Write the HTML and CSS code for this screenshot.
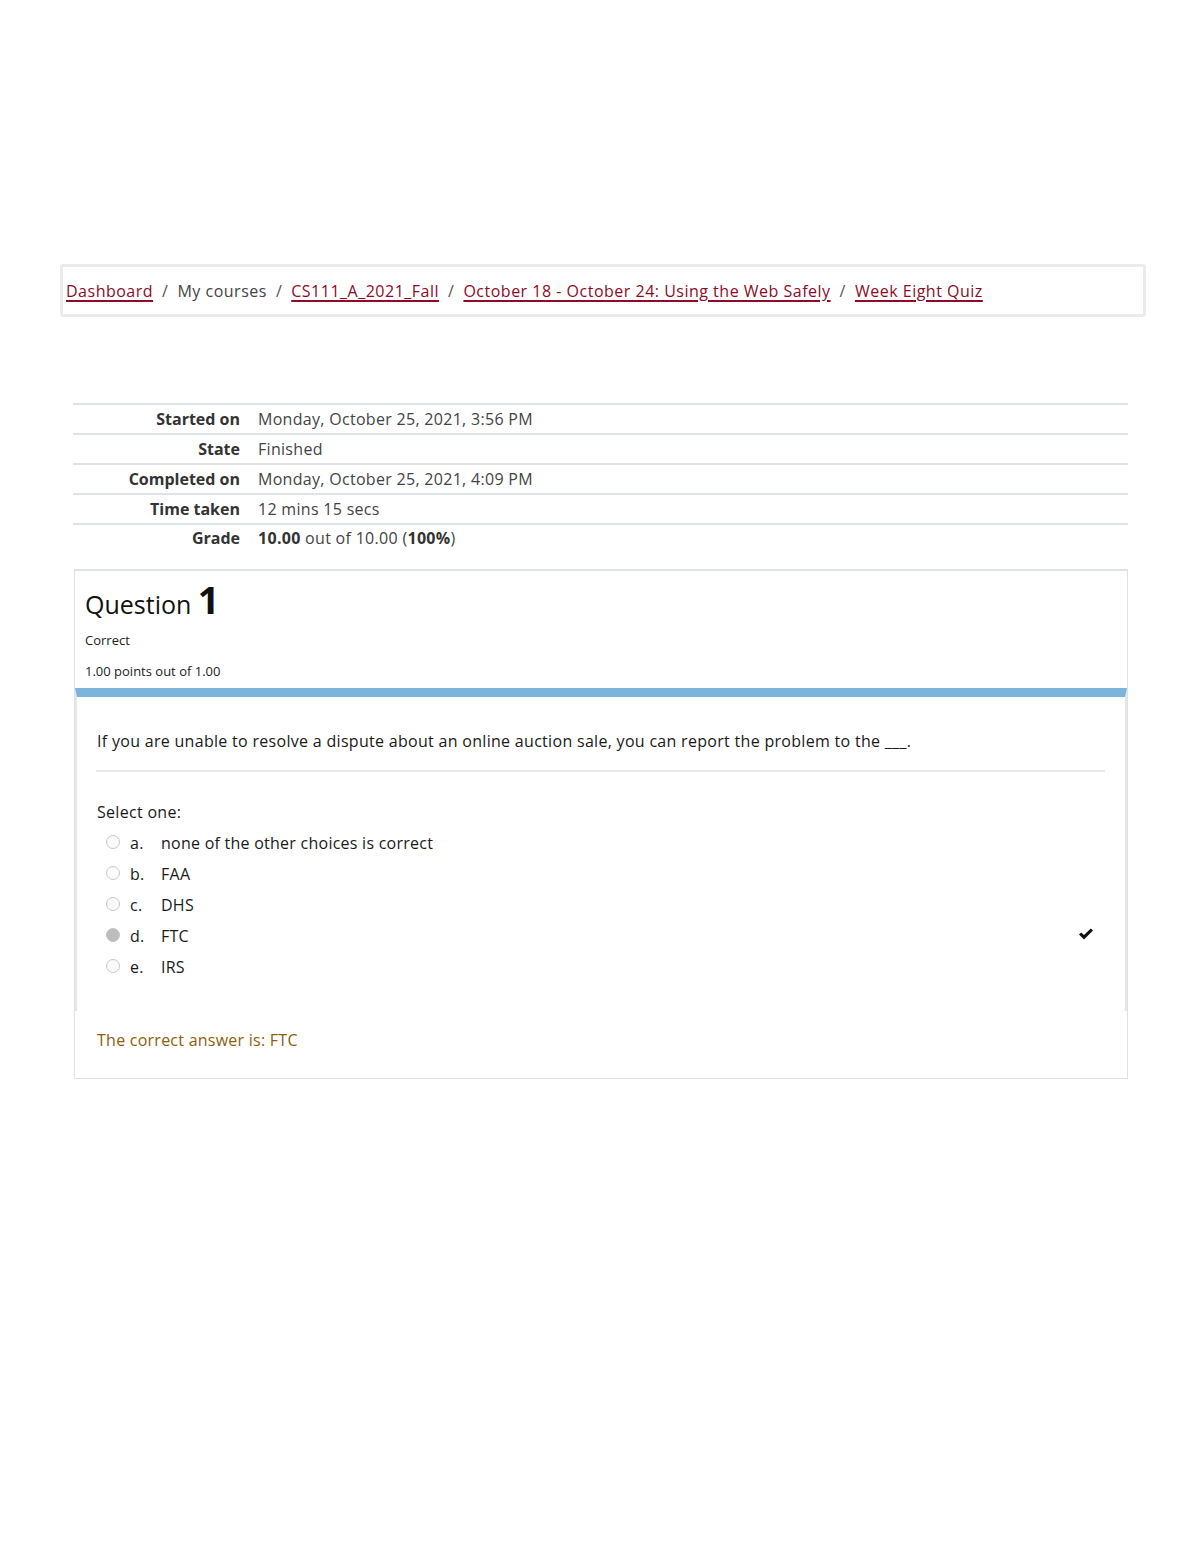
FILE: index.html
```html
<!DOCTYPE html>
<html lang="en">
<head>
<meta charset="utf-8">
<title>Week Eight Quiz: Attempt review</title>
<link rel="stylesheet" href="styles.css">
</head>
<body>
<div class="page">
  <nav class="crumbs">
    <a href="#">Dashboard</a><span class="sep">/</span><span class="plain">My courses</span><span class="sep">/</span>
    <a href="#">CS111_A_2021_Fall</a><span class="sep">/</span>
    <a href="#">October 18 - October 24: Using the Web Safely</a><span class="sep">/</span>
    <a href="#">Week Eight Quiz</a>
  </nav>

  <table class="summary">
    <tr><th>Started on</th><td>Monday, October 25, 2021, 3:56 PM</td></tr>
    <tr><th>State</th><td>Finished</td></tr>
    <tr><th>Completed on</th><td>Monday, October 25, 2021, 4:09 PM</td></tr>
    <tr><th>Time taken</th><td>12 mins 15 secs</td></tr>
    <tr><th>Grade</th><td><b>10.00</b> out of 10.00 (<b>100%</b>)</td></tr>
  </table>

  <div class="que">
    <div class="info">
      <h3 class="qno">Question <span class="num">1</span></h3>
      <div class="state">Correct</div>
      <div class="grade">1.00 points out of 1.00</div>
    </div>
    <div class="formulation">
      <p class="qtext">If you are unable to resolve a dispute about an online auction sale, you can report the problem to the ___.</p>
      <div class="rule"></div>
      <div class="prompt">Select one:</div>
      <div class="answers">
        <div class="opt"><span class="radio"></span><span class="letter">a.</span><span class="text">none of the other choices is correct</span></div>
        <div class="opt"><span class="radio"></span><span class="letter">b.</span><span class="text">FAA</span></div>
        <div class="opt"><span class="radio"></span><span class="letter">c.</span><span class="text">DHS</span></div>
        <div class="opt"><span class="radio checked"></span><span class="letter">d.</span><span class="text">FTC</span>
          <svg class="tick" viewBox="0 0 16 12" width="16" height="12"><path d="M1 6.5 L3.2 4.4 L6 7.1 L12.8 0.4 L15 2.6 L6 11.4 Z" fill="#111"/></svg>
        </div>
        <div class="opt"><span class="radio"></span><span class="letter">e.</span><span class="text">IRS</span></div>
      </div>
    </div>
    <div class="outcome">The correct answer is: FTC</div>
  </div>
</div>
</body>
</html>
```

FILE: styles.css
```css
html, body {
  margin: 0;
  padding: 0;
  background: #fff;
}
body {
  font-family: "Open Sans", "Noto Sans", "Liberation Sans", sans-serif;
  color: #333;
  font-size: 16px;
}
.page {
  padding-top: 264px;
  width: 1200px;
}
.crumbs {
  margin-left: 60px;
  width: 1086px;
  box-sizing: border-box;
  height: 53px;
  border: 3px solid #e9ebee;
  border-radius: 3px;
  display: flex;
  align-items: center;
  padding-left: 3px;
  font-size: 16px;
  letter-spacing: 0.5px;
  white-space: nowrap;
}
.crumbs a {
  color: #8d0b27;
  text-decoration: underline;
  text-decoration-thickness: 2px;
  text-underline-offset: 3px;
}
.crumbs .plain { color: #444; }
.crumbs .sep { color: #555; margin: 0 9px; }

.summary {
  margin: 86px 0 0 73px;
  width: 1055px;
  border-collapse: collapse;
  font-size: 16px;
}
.summary tr { border-top: 2px solid #dfe2e6; height: 30px; }
.summary th {
  width: 167px;
  text-align: right;
  font-weight: 700;
  color: #333;
  padding: 0 8px 0 0;
}
.summary td {
  padding: 0 0 0 10px;
  color: #444;
  letter-spacing: 0.3px;
}
.summary tr:last-child th, .summary tr:last-child td { padding-bottom: 4px; }
.summary b { font-weight: 700; color: #333; }

.que {
  margin: 15px 0 0 74px;
  width: 1054px;
  box-sizing: border-box;
  border: 1px solid #dfe2e6;
  border-top-width: 2px;
}
.info {
  padding: 8px 10px 0 10px;
  height: 117px;
  box-sizing: border-box;
}
.qno {
  margin: 0;
  font-weight: 400;
  font-size: 25px;
  line-height: 40px;
  color: #111;
}
.qno .num {
  font-size: 38px;
  font-weight: 700;
}
.state, .grade {
  font-size: 13px;
  letter-spacing: 0;
  color: #222;
  line-height: 18px;
}
.state { margin-top: 7px; }
.grade { margin-top: 13px; }

.formulation {
  border-top: 9px solid #7db4db;
  border-left: 2px solid #e3e6ea;
  border-right: 2px solid #e3e6ea;
  padding: 33px 20px 29px 20px;
  color: #1a1a1a;
}
.qtext {
  margin: 0;
  font-size: 16px;
  line-height: 22px;
  letter-spacing: 0.3px;
}
.rule {
  height: 2px;
  background: #e6e8eb;
  margin: 18px 0 0 -1px;
}
.prompt {
  margin-top: 25px;
  line-height: 31px;
  height: 31px;
  letter-spacing: 0.3px;
}
.opt {
  position: relative;
  display: flex;
  align-items: center;
  height: 31px;
  padding-left: 9px;
  letter-spacing: 0.25px;
}
.prompt + .answers { margin-top: -1px; }
.radio {
  width: 12px;
  height: 12px;
  border-radius: 50%;
  border: 1px solid #c9c9c9;
  background: #fbfbfb;
  margin-top: -2px;
}
.radio.checked {
  background: #bdbdbd;
  border-color: #c4c4c4;
}
.letter { margin-left: 10px; width: 31px; }
.tick {
  position: absolute;
  right: 11px;
  top: 8px;
}
.outcome {
  color: #8e5d0b;
  padding: 18px 22px 27px 22px;
  line-height: 22px;
  letter-spacing: 0.25px;
}
```
